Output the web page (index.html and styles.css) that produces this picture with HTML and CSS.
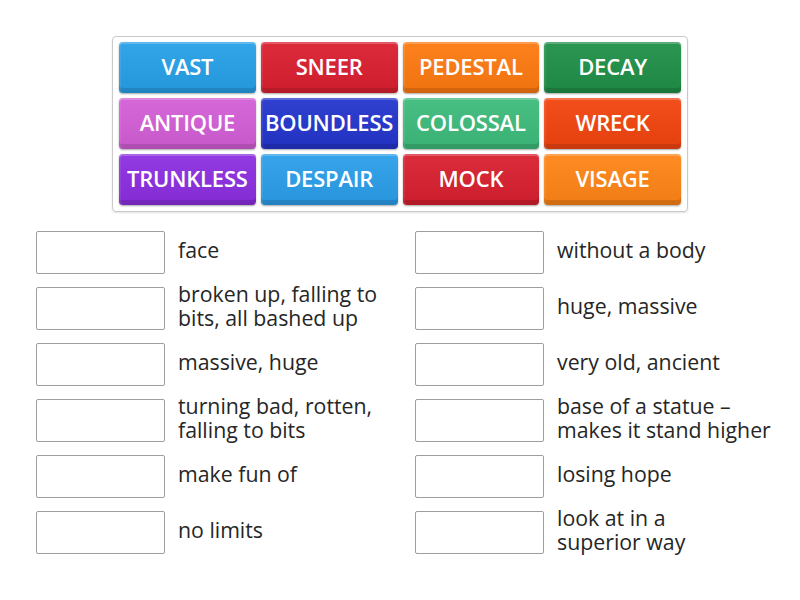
FILE: index.html
```html
<!DOCTYPE html>
<html>
<head>
<meta charset="utf-8">
<link rel="stylesheet" href="styles.css">
</head>
<body>
<div class="page">
  <div class="bank">
    <div class="tile c-vast">VAST</div>
    <div class="tile c-sneer">SNEER</div>
    <div class="tile c-pedestal">PEDESTAL</div>
    <div class="tile c-decay">DECAY</div>
    <div class="tile c-antique">ANTIQUE</div>
    <div class="tile c-boundless">BOUNDLESS</div>
    <div class="tile c-colossal">COLOSSAL</div>
    <div class="tile c-wreck">WRECK</div>
    <div class="tile c-trunkless">TRUNKLESS</div>
    <div class="tile c-despair">DESPAIR</div>
    <div class="tile c-mock">MOCK</div>
    <div class="tile c-visage">VISAGE</div>
  </div>
  <div class="answers">
    <div class="row"><div class="slot"></div><div class="def">face</div></div>
    <div class="row"><div class="slot"></div><div class="def">without a body</div></div>
    <div class="row"><div class="slot"></div><div class="def">broken up, falling to<br>bits, all bashed up</div></div>
    <div class="row"><div class="slot"></div><div class="def">huge, massive</div></div>
    <div class="row"><div class="slot"></div><div class="def">massive, huge</div></div>
    <div class="row"><div class="slot"></div><div class="def">very old, ancient</div></div>
    <div class="row"><div class="slot"></div><div class="def">turning bad, rotten,<br>falling to bits</div></div>
    <div class="row"><div class="slot"></div><div class="def">base of a statue –<br>makes it stand higher</div></div>
    <div class="row"><div class="slot"></div><div class="def">make fun of</div></div>
    <div class="row"><div class="slot"></div><div class="def">losing hope</div></div>
    <div class="row"><div class="slot"></div><div class="def">no limits</div></div>
    <div class="row"><div class="slot"></div><div class="def">look at in a<br>superior way</div></div>
  </div>
</div>
</body>
</html>
```
FILE: styles.css
```css
html, body {
  margin: 0;
  padding: 0;
  background: #ffffff;
}
body {
  width: 800px;
  height: 600px;
  font-family: "Open Sans", "Liberation Sans", sans-serif;
}
.page {
  padding-top: 36px;
}
.bank {
  box-sizing: border-box;
  width: 576px;
  margin-left: 112px;
  border: 1px solid #c9c9c9;
  border-radius: 4px;
  padding: 5px 6px 6px 6px;
  display: grid;
  grid-template-columns: repeat(4, 1fr);
  grid-auto-rows: 51px;
  column-gap: 5px;
  row-gap: 5px;
  box-shadow: 0 1px 2px rgba(0,0,0,0.12);
}
.tile {
  box-sizing: border-box;
  display: flex;
  align-items: center;
  justify-content: center;
  padding-bottom: 4px;
  border-radius: 4px;
  color: #ffffff;
  font-weight: 600;
  font-size: 22px;
  letter-spacing: -0.2px;
  white-space: nowrap;
  box-shadow: inset 0 2px 0 rgba(255,255,255,0.22), inset 2px 0 0 rgba(255,255,255,0.08), inset 0 -5px 0 rgba(0,0,0,0.12), 0 1px 2px rgba(0,0,0,0.35);
  background-image: linear-gradient(to bottom, rgba(255,255,255,0.06), rgba(0,0,0,0.06));
}
.c-vast { background-color: #26a0e8; }
.c-sneer { background-color: #da1f2f; }
.c-pedestal { background-color: #fd7a10; }
.c-decay { background-color: #1f8f48; }
.c-antique { background-color: #d35ed6; }
.c-boundless { background-color: #2334cc; }
.c-colossal { background-color: #3dbb7b; }
.c-wreck { background-color: #f2440f; }
.c-trunkless { background-color: #8c2ee0; }
.c-despair { background-color: #2a9ee9; }
.c-mock { background-color: #d81f2e; }
.c-visage { background-color: #ff8416; }

.answers {
  margin-top: 19px;
  margin-left: 36px;
  display: grid;
  grid-template-columns: 379px 379px;
  grid-auto-rows: 43px;
  row-gap: 13px;
}
.row {
  display: flex;
  align-items: center;
}
.slot {
  box-sizing: border-box;
  flex: none;
  width: 129px;
  height: 43px;
  border: 1px solid #9e9e9e;
  border-radius: 2px;
  background: #ffffff;
}
.def {
  margin-left: 13px;
  padding-bottom: 6px;
  font-size: 21.3px;
  line-height: 24px;
  color: #262626;
  white-space: nowrap;
}
```
